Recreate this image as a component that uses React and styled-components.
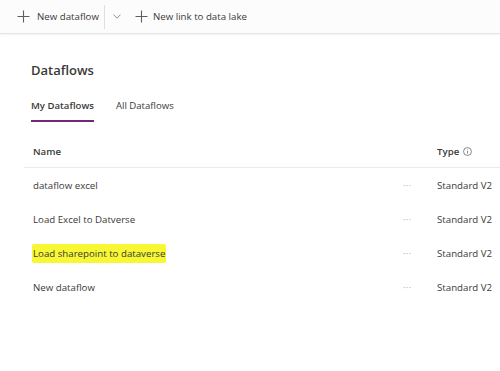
import React from 'react'
import styled, { createGlobalStyle } from 'styled-components'

const Global = createGlobalStyle`
  body {
    margin: 0;
    background: #fff;
    font-family: "Open Sans", "Noto Sans", sans-serif;
    color: #3b3a39;
  }
`

const Page = styled.div`
  width: 500px;
  height: 371px;
  overflow: hidden;
  background: #fff;
`

const Toolbar = styled.div`
  height: 33px;
  display: flex;
  align-items: center;
  padding-left: 17px;
  border-bottom: 1px solid #e5e5e5;
  box-shadow: 0 1px 2px rgba(0, 0, 0, 0.06);
  background: #fcfcfc;
`

const ToolButton = styled.div`
  display: flex;
  align-items: center;
  gap: ${p => p.gap || 7}px;
  font-size: 9.7px;
  padding-right: 5px;
`

const Divider = styled.div`
  width: 1px;
  height: 24px;
  background: #e1dfdd;
  margin-right: 8px;
`

const Chevron = styled.div`
  display: flex;
  align-items: center;
  margin-right: 14px;
`

const Content = styled.div`
  padding-left: 24px;
`

const Title = styled.h1`
  margin: 26px 0 0 7px;
  font-size: 13px;
  font-weight: 600;
  line-height: 20px;
`

const Tabs = styled.div`
  display: flex;
  gap: 22px;
  margin: 18px 0 0 7px;
`

const Tab = styled.div`
  font-size: 9.6px;
  font-weight: ${p => (p.active ? 600 : 400)};
  padding-bottom: 6px;
  line-height: 16px;
  border-bottom: 2px solid ${p => (p.active ? '#742774' : 'transparent')};
`

const Table = styled.div`
  margin-top: 13px;
`

const HeaderRow = styled.div`
  display: grid;
  grid-template-columns: 1fr 63px;
  height: 32px;
  align-items: center;
  border-bottom: 1px solid #edebe9;
  font-size: 9.7px;
  font-weight: 600;
`

const Row = styled.div`
  display: grid;
  grid-template-columns: 1fr 34px 63px;
  height: 34px;
  align-items: center;
  font-size: 9.7px;
`

const NameCell = styled.div`
  padding-left: 9px;
`

const Highlight = styled.span`
  background: #f7f733;
  padding: 3px 1px;
  margin-left: -1px;
  border-radius: 2px;
`

const More = styled.div`
  color: #a19f9d;
  font-size: 9px;
  letter-spacing: 0.5px;
`

const TypeCell = styled.div`
  display: flex;
  align-items: center;
  gap: 4px;
  white-space: nowrap;
`

const Plus = () => (
  <svg width="13" height="13" viewBox="0 0 13 13">
    <path d="M6.5 0.5v12M0.5 6.5h12" stroke="#605e5c" strokeWidth="1.1" fill="none" />
  </svg>
)

const Info = () => (
  <svg width="9" height="9" viewBox="0 0 10 10">
    <circle cx="5" cy="5" r="4.4" stroke="#605e5c" strokeWidth="0.8" fill="none" />
    <path d="M5 4.3v3" stroke="#605e5c" strokeWidth="0.8" />
    <circle cx="5" cy="2.9" r="0.5" fill="#605e5c" />
  </svg>
)

const rows = [
  { name: 'dataflow excel' },
  { name: 'Load Excel to Datverse' },
  { name: 'Load sharepoint to dataverse', marked: true },
  { name: 'New dataflow' },
]

export default function App() {
  return (
    <Page>
      <Global />
      <Toolbar>
        <ToolButton>
          <Plus />
          New dataflow
        </ToolButton>
        <Divider />
        <Chevron>
          <svg width="8" height="5" viewBox="0 0 8 5">
            <path d="M0.5 0.6l3.5 3.6 3.5-3.6" stroke="#8a8886" strokeWidth="0.9" fill="none" />
          </svg>
        </Chevron>
        <ToolButton gap={5}>
          <Plus />
          New link to data lake
        </ToolButton>
      </Toolbar>
      <Content>
        <Title>Dataflows</Title>
        <Tabs>
          <Tab active>My Dataflows</Tab>
          <Tab>All Dataflows</Tab>
        </Tabs>
        <Table>
          <HeaderRow>
            <NameCell>Name</NameCell>
            <TypeCell>
              Type <Info />
            </TypeCell>
          </HeaderRow>
          {rows.map(r => (
            <Row key={r.name}>
              <NameCell>{r.marked ? <Highlight>{r.name}</Highlight> : r.name}</NameCell>
              <More>···</More>
              <TypeCell>Standard V2</TypeCell>
            </Row>
          ))}
        </Table>
      </Content>
    </Page>
  )
}
